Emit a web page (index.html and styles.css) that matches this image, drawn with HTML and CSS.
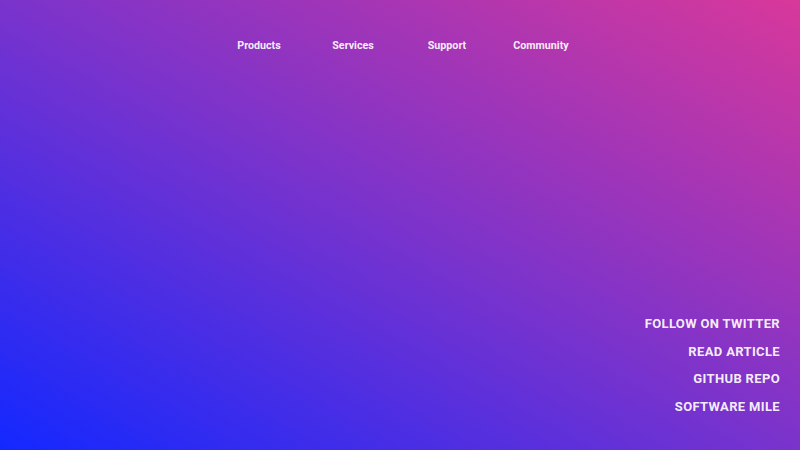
FILE: index.html
```html
<!DOCTYPE html>
<html>
<head>
<meta charset="utf-8">
<link rel="stylesheet" href="styles.css">
</head>
<body>
<div class="page">
  <nav class="nav">
    <a class="nav-item">Products</a>
    <a class="nav-item">Services</a>
    <a class="nav-item">Support</a>
    <a class="nav-item">Community</a>
  </nav>
  <div class="links">
    <a class="link">Follow on Twitter</a>
    <a class="link">Read Article</a>
    <a class="link">Github Repo</a>
    <a class="link">Software Mile</a>
  </div>
</div>
</body>
</html>
```
FILE: styles.css
```css
html, body {
  margin: 0;
  padding: 0;
  width: 800px;
  height: 450px;
  overflow: hidden;
}
.page {
  width: 800px;
  height: 450px;
  box-sizing: border-box;
  background: linear-gradient(to top right, #1328ff 0%, #7a33cc 50%, #d8389a 100%);
  font-family: Roboto, "Liberation Sans", sans-serif;
  color: rgba(255,255,255,0.93);
  display: flex;
  flex-direction: column;
  justify-content: space-between;
  padding: 38px 20px 36px 20px;
}
.nav {
  display: grid;
  grid-template-columns: repeat(4, 94px);
  justify-content: center;
  font-size: 10.7px;
  font-weight: 700;
  line-height: 16px;
}
.nav-item {
  text-align: center;
}
.links {
  display: flex;
  flex-direction: column;
  align-items: flex-end;
  gap: 12px;
  font-size: 13px;
  font-weight: 700;
  letter-spacing: 0.35px;
  text-transform: uppercase;
  line-height: 15.5px;
}
```
